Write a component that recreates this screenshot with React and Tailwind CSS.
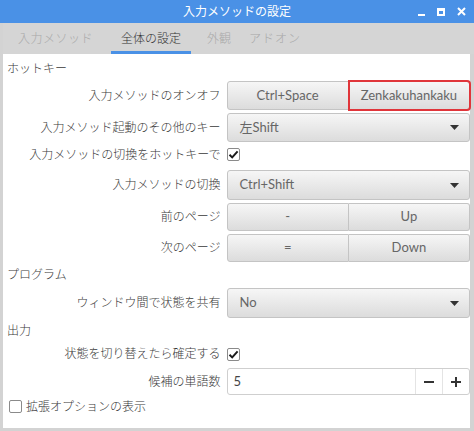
import React from "react";

const font = { fontFamily: '"Lato", "Noto Sans CJK JP", sans-serif' };

function Check({ checked }) {
  return (
    <span className="w-[13px] h-[13px] border border-[#8a8a8a] rounded-[2px] bg-white flex items-center justify-center">
      {checked && (
        <svg width="11" height="11" viewBox="0 0 11 11">
          <path d="M1.5 5.8 L4.2 8.4 L9.6 2.4" fill="none" stroke="#1a1a1a" strokeWidth="2" />
        </svg>
      )}
    </span>
  );
}

function Btn({ children, className = "" }) {
  return (
    <div
      className={
        "flex-1 flex items-center justify-center border border-[#c4c4c4] rounded-[3px] bg-gradient-to-b from-[#f6f6f6] to-[#dcdcdc] text-[#666] text-[13px] font-normal " +
        className
      }
    >
      {children}
    </div>
  );
}

function Combo({ value }) {
  return (
    <div className="h-full flex items-center justify-between px-[12px] border border-[#c4c4c4] rounded-[3px] bg-gradient-to-b from-[#f6f6f6] to-[#dcdcdc] text-[#666] text-[13px] font-normal">
      <span>{value}</span>
      <svg width="9" height="5" viewBox="0 0 9 5" className="mr-[-2px]">
        <path d="M0 0 L9 0 L4.5 5 Z" fill="#333" />
      </svg>
    </div>
  );
}

function Row({ label, h, mt = 0, children }) {
  return (
    <div className="flex" style={{ height: h, marginTop: mt }}>
      <div className="w-[218px] flex items-center justify-end text-[#3a3a3a] text-[12px] font-light whitespace-nowrap">
        {label}
      </div>
      <div className="w-[244px] ml-[6px] flex">{children}</div>
    </div>
  );
}

export default function App() {
  return (
    <div className="w-[474px] h-[431px] bg-[#d3d3d3] overflow-hidden" style={font}>
      <div className="h-[23px] bg-[#4a91e6] flex items-center justify-center relative">
        <span className="text-white text-[12px]">入力メソッドの設定</span>
        <div className="absolute right-[8px] top-0 h-full flex items-center gap-[12px]">
          <span className="w-[7px] h-[2px] bg-white mt-[6px]" />
          <span className="w-[8px] h-[8px] border-2 border-white border-t-[3px]" />
          <svg width="9" height="9" viewBox="0 0 9 9">
            <path d="M1 1 L8 8 M8 1 L1 8" stroke="white" strokeWidth="2" />
          </svg>
        </div>
      </div>
      <div className="h-[31px] bg-[#d5d5d5] flex items-stretch pl-[15px] text-[12px] font-light ml-[3px]">
        <div className="flex items-center text-[#a9a9a9] tracking-[0.5px]">入力メソッド</div>
        <div className="flex items-center ml-[18px] w-[80px] justify-center text-[#333] border-b-[3px] border-[#4a91e6] pt-[3px]">
          全体の設定
        </div>
        <div className="flex items-center ml-[16px] text-[#a9a9a9]">外観</div>
        <div className="flex items-center ml-[18px] text-[#a9a9a9] tracking-[1px]">アドオン</div>
      </div>
      <div className="ml-[3px] mr-[4px] h-[374px] bg-white flex flex-col text-[12px] font-light">
        <div className="h-[27px] pl-[4px] pt-[3px] flex items-center text-[#3a3a3a]">ホットキー</div>
        <Row label="入力メソッドのオンオフ" h={29}>
          <Btn className="rounded-r-none">Ctrl+Space</Btn>
          <Btn className="rounded-l-none border-l-0 outline-2 outline-[#e0353a] -outline-offset-1">
            Zenkakuhankaku
          </Btn>
        </Row>
        <Row label="入力メソッド起動のその他のキー" h={29} mt={3}>
          <div className="flex-1">
            <Combo value="左Shift" />
          </div>
        </Row>
        <Row label="入力メソッドの切換をホットキーで" h={25}>
          <div className="flex items-center">
            <Check checked />
          </div>
        </Row>
        <Row label="入力メソッドの切換" h={30} mt={3}>
          <div className="flex-1">
            <Combo value="Ctrl+Shift" />
          </div>
        </Row>
        <Row label="前のページ" h={28} mt={3}>
          <Btn className="rounded-r-none">-</Btn>
          <Btn className="rounded-l-none border-l-0">Up</Btn>
        </Row>
        <Row label="次のページ" h={28} mt={3}>
          <Btn className="rounded-r-none">=</Btn>
          <Btn className="rounded-l-none border-l-0">Down</Btn>
        </Row>
        <div className="h-[26px] pl-[4px] flex items-center text-[#3a3a3a]">プログラム</div>
        <Row label="ウィンドウ間で状態を共有" h={30}>
          <div className="flex-1">
            <Combo value="No" />
          </div>
        </Row>
        <div className="h-[26px] pl-[4px] flex items-center text-[#3a3a3a]">出力</div>
        <Row label="状態を切り替えたら確定する" h={20} mt={0}>
          <div className="flex items-center">
            <Check checked />
          </div>
        </Row>
        <Row label="候補の単語数" h={27} mt={4}>
          <div className="flex-1 flex border border-[#cfcfcf] rounded-[3px] bg-white text-[#444] text-[13px] font-normal">
            <div className="flex-1 flex items-center pl-[6px]">5</div>
            <div className="w-[27px] border-l border-[#e4e4e4] flex items-center justify-center">
              <span className="w-[10px] h-[2px] bg-[#333]" />
            </div>
            <div className="w-[27px] border-l border-[#e4e4e4] flex items-center justify-center">
              <svg width="10" height="10" viewBox="0 0 10 10">
                <path d="M0 5 H10 M5 0 V10" stroke="#333" strokeWidth="2" />
              </svg>
            </div>
          </div>
        </Row>
        <div className="h-[23px] pl-[6px] flex items-center gap-[4px] text-[#3a3a3a]">
          <Check />
          <span>拡張オプションの表示</span>
        </div>
      </div>
    </div>
  );
}
